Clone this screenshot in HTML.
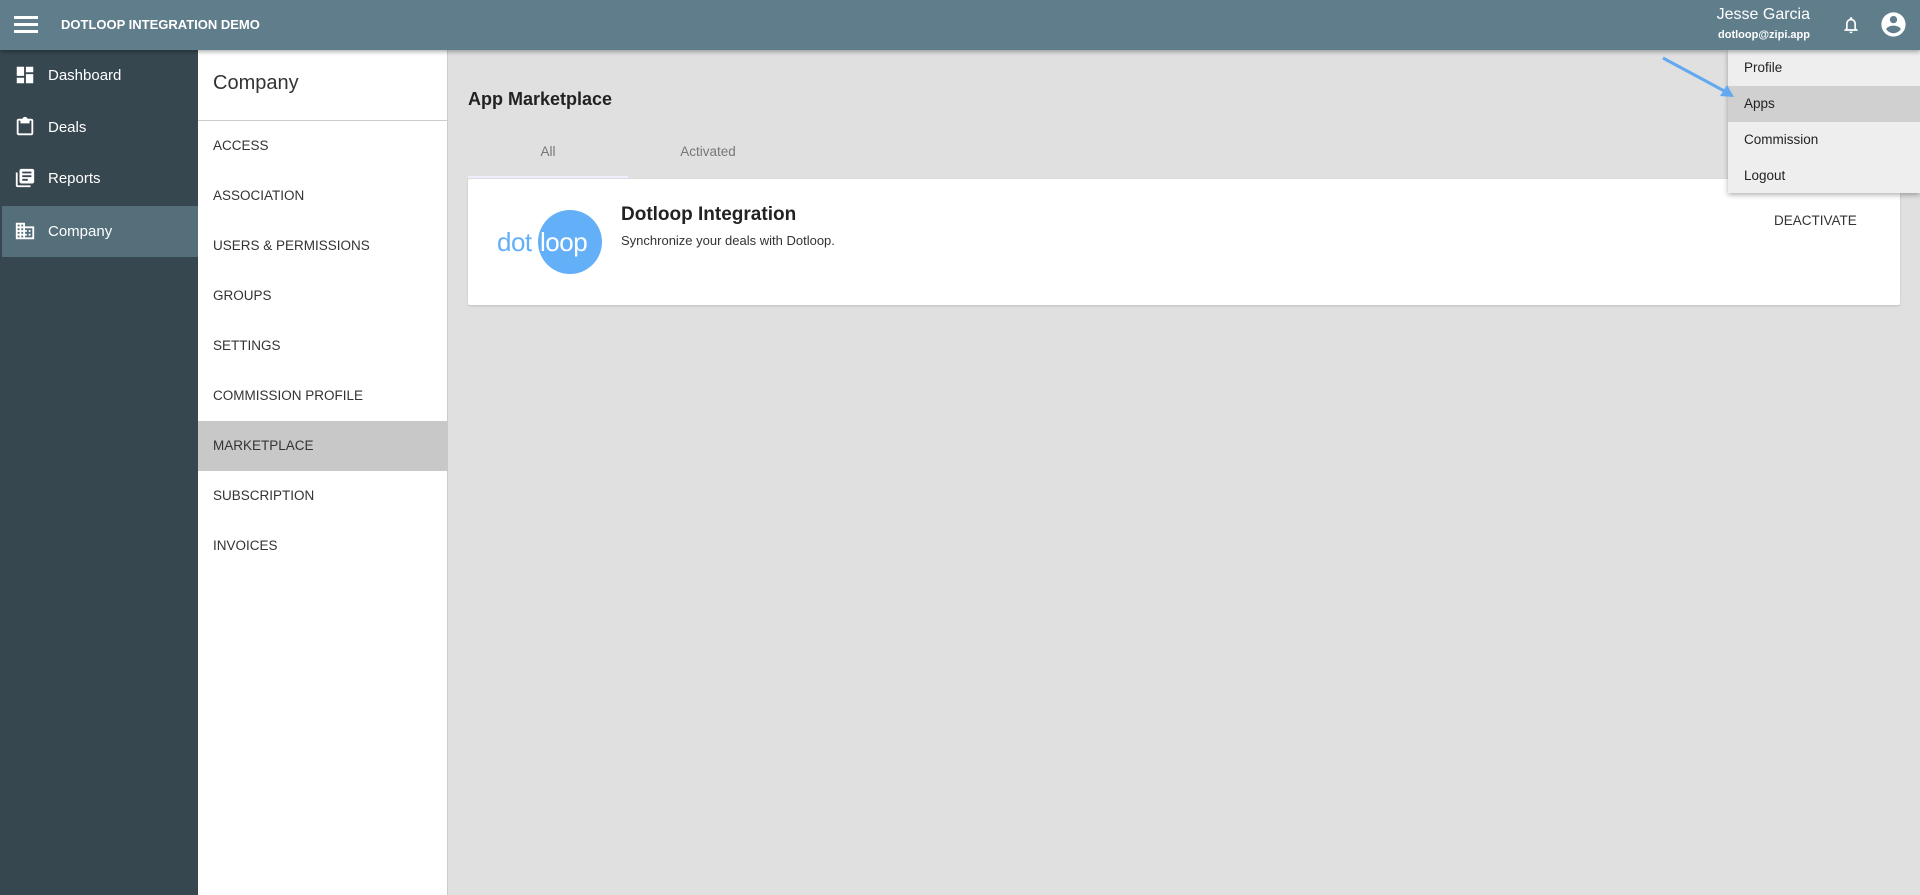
<!DOCTYPE html>
<html><head><style>
*{box-sizing:border-box;margin:0;padding:0}
body{width:1920px;height:895px;overflow:hidden;font-family:"Liberation Sans",Arial,sans-serif;background:#e0e0e0;position:relative}
.hdr{position:absolute;left:0;top:0;width:1920px;height:50px;background:#607d8b;box-shadow:0 2px 4px rgba(0,0,0,.3);z-index:3}
.side{position:absolute;left:0;top:50px;width:198px;height:845px;background:#37474f}
.si{position:absolute;left:2px;width:196px;height:51px;color:#fff;font-size:15px;line-height:51px;padding-left:46px}
.si svg{position:absolute;left:12px;top:14px}
.sub{position:absolute;left:198px;top:50px;width:250px;height:845px;background:#fff;border-right:1px solid #ccc}
.mi{position:absolute;left:0;width:250px;height:50px;line-height:50px;padding-left:15px;font-size:13.5px;color:#333}
.card{position:absolute;left:468px;top:179px;width:1432px;height:126px;background:#fff;border-radius:2px;box-shadow:0 1px 2px rgba(0,0,0,.15)}
.dd{position:absolute;left:1728px;top:50px;width:192px;height:143px;background:#eee;box-shadow:0 2px 5px rgba(0,0,0,.3);z-index:2}
.dd div{height:36px;line-height:36px;padding-left:16px;font-size:13.5px;color:#222}
</style></head><body>
<div class="hdr">
<div style="position:absolute;left:14px;top:16px;width:24px;height:3px;background:#fff;box-shadow:0 7px 0 #fff,0 14px 0 #fff"></div>
<div style="position:absolute;left:61px;top:17px;color:#fff;font-weight:bold;font-size:13px">DOTLOOP INTEGRATION DEMO</div>
<div style="position:absolute;right:110px;top:6px;color:#fff;font-size:16px;text-align:right">Jesse Garcia</div>
<div style="position:absolute;right:110px;top:29px;color:#fff;font-size:11px;font-weight:bold;text-align:right">dotloop@zipi.app</div>
<svg style="position:absolute;left:1841px;top:14px" width="20" height="22" viewBox="0 0 24 24"><path fill="#fff" d="M12 22c1.1 0 2-.9 2-2h-4c0 1.1.9 2 2 2zm6-6v-5c0-3.07-1.640-5.64-4.5-6.32V4a1.5 1.5 0 0 0-3 0v.68C7.63 5.36 6 7.92 6 11v5l-2 2v1h16v-1l-2-2zm-2 1H8v-6c0-2.48 1.51-4.5 4-4.5s4 2.02 4 4.5v6z"/></svg>
<svg style="position:absolute;left:1879px;top:10px" width="29" height="29" viewBox="0 0 24 24"><path fill="#fff" d="M12 2C6.48 2 2 6.48 2 12s4.48 10 10 10 10-4.480 10-10S17.52 2 12 2zm0 3c1.66 0 3 1.34 3 3s-1.34 3-3 3-3-1.34-3-3 1.34-3 3-3zm0 14.2c-2.5 0-4.710-1.28-6-3.22.03-1.99 4-3.08 6-3.080 1.99 0 5.97 1.09 6 3.08-1.29 1.94-3.5 3.22-6 3.22z"/></svg>
</div>
<div class="side">
<div class="si" style="top:0"><svg width="22" height="22" viewBox="0 0 24 24"><path fill="#fff" d="M3 13h8V3H3v10zm0 8h8v-6H3v6zm10 0h8V11h-8v10zm0-18v6h8V3h-8z"/></svg>Dashboard</div>
<div class="si" style="top:52px"><svg width="22" height="22" viewBox="0 0 24 24"><path fill="#fff" d="M19 3h-4.18C14.4 1.84 13.3 1 12 1s-2.4.84-2.82 2H5c-1.1 0-2 .9-2 2v14c0 1.1.9 2 2 2h14c1.1 0 2-.9 2-2V5c0-1.1-.9-2-2-2zm0 16H5V5h2v3h10V5h2v14z"/></svg>Deals</div>
<div class="si" style="top:103px"><svg width="22" height="22" viewBox="0 0 24 24"><path fill="#fff" d="M4 6H2v14c0 1.1.9 2 2 2h14v-2H4V6zm16-4H8c-1.1 0-2 .9-2 2v12c0 1.1.9 2 2 2h12c1.1 0 2-.9 2-2V4c0-1.1-.9-2-2-2zm-1 9H9V9h10v2zm-4 4H9v-2h6v2zm4-8H9V5h10v2z"/></svg>Reports</div>
<div class="si" style="top:156px;background:#546e7a"><svg width="22" height="22" viewBox="0 0 24 24"><path fill="#fff" d="M12 7V3H2v18h20V7H12zM6 19H4v-2h2v2zm0-4H4v-2h2v2zm0-4H4V9h2v2zm0-4H4V5h2v2zm4 12H8v-2h2v2zm0-4H8v-2h2v2zm0-4H8V9h2v2zm0-4H8V5h2v2zm10 12h-8v-2h2v-2h-2v-2h2v-2h-2V9h8v10zm-2-8h-2v2h2v-2zm0 4h-2v2h2v-2z"/></svg>Company</div>
</div>
<div class="sub">
<div style="position:absolute;left:15px;top:22px;font-size:20px;color:#333">Company</div>
<div style="position:absolute;left:0;top:70px;width:250px;height:1px;background:#ccc"></div>
<div class="mi" style="top:71px">ACCESS</div>
<div class="mi" style="top:121px">ASSOCIATION</div>
<div class="mi" style="top:171px">USERS &amp; PERMISSIONS</div>
<div class="mi" style="top:221px">GROUPS</div>
<div class="mi" style="top:271px">SETTINGS</div>
<div class="mi" style="top:321px">COMMISSION PROFILE</div>
<div class="mi" style="top:371px;background:#c8c8c8">MARKETPLACE</div>
<div class="mi" style="top:421px">SUBSCRIPTION</div>
<div class="mi" style="top:471px">INVOICES</div>
</div>
<div style="position:absolute;left:468px;top:89px;font-size:18px;font-weight:bold;color:#222">App Marketplace</div>
<div style="position:absolute;left:468px;top:144px;width:160px;text-align:center;font-size:13.5px;color:#777">All</div>
<div style="position:absolute;left:628px;top:144px;width:160px;text-align:center;font-size:13.5px;color:#777">Activated</div>
<div style="position:absolute;left:468px;top:176px;width:160px;height:2px;background:#eef"></div>
<div class="card">
<div style="position:absolute;left:70px;top:31px;width:64px;height:64px;border-radius:50%;background:#64b0f8"></div>
<div style="position:absolute;left:29px;top:48px;font-size:26px;color:#64b0f8;letter-spacing:-0.5px">dot</div>
<div style="position:absolute;left:72px;top:48px;font-size:26px;color:#fff;letter-spacing:-0.5px">loop</div>
<div style="position:absolute;left:153px;top:25px;font-size:19px;font-weight:bold;color:#222">Dotloop Integration</div>
<div style="position:absolute;left:153px;top:54px;font-size:13px;color:#333">Synchronize your deals with Dotloop.</div>
<div style="position:absolute;left:1306px;top:34px;font-size:13.5px;color:#333">DEACTIVATE</div>
</div>
<div class="dd">
<div>Profile</div><div style="background:#d0d0d0">Apps</div><div>Commission</div><div>Logout</div>
</div>
<svg style="position:absolute;left:1660px;top:55px;z-index:4" width="80" height="50"><line x1="3" y1="3" x2="68" y2="38" stroke="#64a8f0" stroke-width="3"/><polygon points="74,42 60,41 67,30" fill="#64a8f0"/></svg>
</body></html>
